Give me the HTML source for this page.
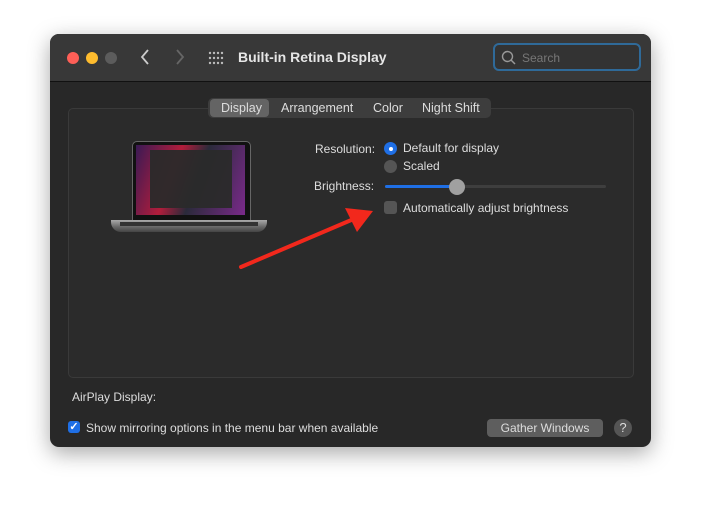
<!DOCTYPE html><html><head><style>
body{margin:0;width:701px;height:514px;background:#fff;font-family:"Liberation Sans",sans-serif;position:relative;overflow:hidden}
.win{position:absolute;left:50px;top:34px;width:601px;height:413px;background:#282828;border-radius:9px;box-shadow:0 6px 22px rgba(0,0,0,.35);overflow:hidden}
.tb{position:absolute;left:0;top:0;width:601px;height:47px;background:#383838;border-bottom:1px solid #111}
.d{position:absolute;top:18px;width:12px;height:12px;border-radius:50%}
.t{position:absolute;color:#ddd;font-size:12px}
.panel{position:absolute;left:18px;top:74px;width:564px;height:268px;border:1px solid #3a3a3a;background:#2b2b2b;border-radius:5px}
.seg{position:absolute;left:158px;top:64px;width:283px;height:20px;background:#3d3d3d;border-radius:5px}
</style></head><body>
<div class="win">
<div class="tb">
<div class="d" style="left:17px;background:#fe5f57"></div>
<div class="d" style="left:36px;background:#febc2e"></div>
<div class="d" style="left:55px;background:#5c5c5c"></div>
<svg style="position:absolute;left:90px;top:14px" width="12" height="18"><path d="M8 2 L2 9 L8 16" stroke="#ccc" stroke-width="1.8" fill="none"/></svg>
<svg style="position:absolute;left:124px;top:14px" width="12" height="18"><path d="M3 2 L9 9 L3 16" stroke="#666" stroke-width="1.8" fill="none"/></svg>
<svg style="position:absolute;left:158px;top:17px" width="16" height="14" fill="#bbb"><g id="r"><circle cx="2" cy="2" r="1.2"/><circle cx="6" cy="2" r="1.2"/><circle cx="10" cy="2" r="1.2"/><circle cx="14" cy="2" r="1.2"/></g><use href="#r" y="5"/><use href="#r" y="10"/></svg>
<div class="t" style="left:188px;top:15px;font-size:14px;font-weight:bold;color:#e6e6e6">Built-in Retina Display</div>
<div style="position:absolute;left:443px;top:9px;width:144px;height:24px;border:2px solid #2f6a99;border-radius:6px;background:#333"></div>
<svg style="position:absolute;left:451px;top:16px" width="16" height="16"><circle cx="6.5" cy="6.5" r="5" stroke="#999" stroke-width="1.4" fill="none"/><path d="M10 10 L14 14" stroke="#999" stroke-width="1.5"/></svg>
<div class="t" style="left:472px;top:17px;color:#777;font-size:12px">Search</div>
</div>
<div class="panel"></div>
<div class="seg"></div>
<div style="position:absolute;left:160px;top:65px;width:59px;height:18px;background:#646464;border-radius:4px"></div>
<div class="t" style="left:171px;top:67px;font-size:12.5px">Display</div>
<div class="t" style="left:231px;top:67px;font-size:12.5px">Arrangement</div>
<div class="t" style="left:323px;top:67px;font-size:12.5px">Color</div>
<div class="t" style="left:372px;top:67px;font-size:12.5px">Night Shift</div>
<div style="position:absolute;left:82px;top:107px;width:117px;height:78px;background:#111;border:1px solid #666;border-radius:5px 5px 0 0"></div>
<div style="position:absolute;left:86px;top:111px;width:109px;height:70px;background:linear-gradient(110deg,#3a1a55 0%,#b21d3b 35%,#2a2a3a 55%,#7a2a8a 100%)"></div>
<div style="position:absolute;left:100px;top:116px;width:82px;height:58px;background:#2a2a2a;opacity:.95"></div>
<div style="position:absolute;left:61px;top:186px;width:156px;height:12px;background:linear-gradient(#aaa,#666 60%,#444);border-radius:0 0 10px 10px"></div>
<div style="position:absolute;left:70px;top:188px;width:138px;height:4px;background:#333"></div>
<div class="t" style="left:265px;top:108px">Resolution:</div>
<div style="position:absolute;left:334px;top:108px;width:13px;height:13px;border-radius:50%;background:#1f6fe5"><div style="margin:4.5px;width:4px;height:4px;border-radius:50%;background:#fff"></div></div>
<div class="t" style="left:353px;top:107px">Default for display</div>
<div style="position:absolute;left:334px;top:126px;width:13px;height:13px;border-radius:50%;background:#555"></div>
<div class="t" style="left:353px;top:125px">Scaled</div>
<div class="t" style="left:264px;top:145px">Brightness:</div>
<div style="position:absolute;left:335px;top:151px;width:221px;height:3px;background:#3e3e3e;border-radius:2px"></div>
<div style="position:absolute;left:335px;top:151px;width:72px;height:3px;background:#1f6fe5;border-radius:2px"></div>
<div style="position:absolute;left:399px;top:145px;width:16px;height:16px;border-radius:50%;background:#a0a0a0"></div>
<div style="position:absolute;left:334px;top:167px;width:13px;height:13px;border-radius:3px;background:#555"></div>
<div class="t" style="left:353px;top:167px">Automatically adjust brightness</div>
<div class="t" style="left:22px;top:356px">AirPlay Display:</div>
<div style="position:absolute;left:18px;top:387px;width:12px;height:12px;border-radius:3px;background:#1f6fe5;color:#fff;font-size:11px;line-height:12px;text-align:center;font-weight:bold">✓</div>
<div class="t" style="left:36px;top:387px">Show mirroring options in the menu bar when available</div>
<div style="position:absolute;left:437px;top:385px;width:116px;height:18px;background:#5e5e5e;border-radius:4px;color:#ddd;font-size:12px;text-align:center;line-height:18px">Gather Windows</div>
<div style="position:absolute;left:564px;top:385px;width:18px;height:18px;border-radius:50%;background:#555;color:#ddd;font-size:13px;text-align:center;line-height:18px">?</div>
</div>
<svg style="position:absolute;left:0;top:0" width="701" height="514"><path d="M241 267 L356 218" stroke="#f2281c" stroke-width="4" stroke-linecap="round"/><path d="M373 211 L345 208 L357 232 Z" fill="#f2281c"/></svg>
</body></html>
